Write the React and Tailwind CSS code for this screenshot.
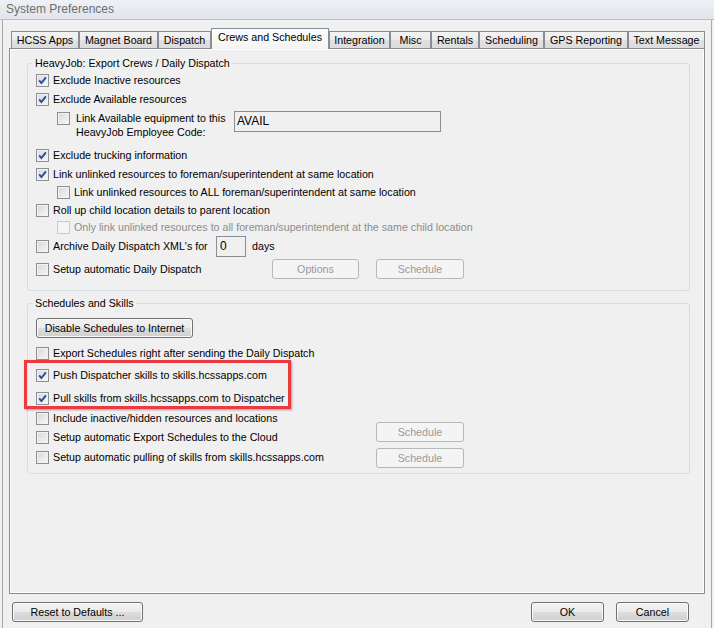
import clsx from "clsx";

const tabs = [
  ["HCSS Apps", "w-[68px]"],
  ["Magnet Board", "w-[79px]"],
  ["Dispatch", "w-[53px]"],
  ["Crews and Schedules", "w-[118px]", true],
  ["Integration", "w-[61px]"],
  ["Misc", "w-[41px]"],
  ["Rentals", "w-[48px]"],
  ["Scheduling", "w-[65px]"],
  ["GPS Reporting", "w-[84px]"],
  ["Text Message", "w-[77px]"],
];

function Check({ checked, disabled, className }) {
  return (
    <span
      className={clsx(
        "flex h-[13px] w-[13px] shrink-0 items-center justify-center border",
        disabled
          ? "border-[#c9cbcc] bg-[#f4f4f4]"
          : "border-[#8e8f8f] bg-[linear-gradient(135deg,#d6d8db,#f7f7f7)] shadow-[inset_0_0_0_1px_#f2f2f2]",
        className
      )}
    >
      {checked && (
        <svg viewBox="0 0 11 11" className="h-[11px] w-[11px]">
          <path d="M2.2 5.4 L4.4 8 L8.9 2.3" fill="none" stroke="#2a4a9e" strokeWidth="1.9" />
        </svg>
      )}
    </span>
  );
}

function Btn({ children, disabled, className }) {
  return (
    <button
      className={clsx(
        "flex h-[20px] shrink-0 items-center justify-center rounded-[3px] border",
        disabled
          ? "border-[#b5b8ba] bg-[#f4f4f4] text-[#9a9a9a]"
          : "border-[#707070] bg-[linear-gradient(#f2f2f2,#ebebeb_50%,#dddddd_50%,#cfcfcf)] text-black shadow-[inset_0_0_0_1px_#fbfbfb]",
        className
      )}
    >
      {children}
    </button>
  );
}

function Row({ checked, disabled, h, indent, children, extra, labelW }) {
  return (
    <div className={clsx("flex items-center", h, indent && "pl-[21px]")}>
      <Check checked={checked} disabled={disabled} />
      <span className={clsx("ml-[4px] shrink-0 whitespace-nowrap", labelW, disabled && "text-[#8d8d8d]")}>
        {children}
      </span>
      {extra}
    </div>
  );
}

function Group({ title, className, children }) {
  return (
    <fieldset className={clsx("w-[663px] rounded-[3px] border border-[#d5dfe5] pl-[8px]", className)}>
      <legend className="-ml-[3px] px-[2px] leading-[14px]">{title}</legend>
      {children}
    </fieldset>
  );
}

export default function App() {
  return (
    <div className="relative h-[628px] w-[714px] overflow-hidden bg-[#f0f0f0] font-['Liberation_Sans',Arial,sans-serif] text-[10.7px] leading-[13px] text-black">
      {/* Title bar */}
      <div className="flex h-[20px] items-center border-b border-[#b9bfc6] bg-[linear-gradient(#eef1f5,#e0e5eb)] pl-[6px] text-[12px] text-[#6e6e6e]">
        System Preferences
      </div>

      <div className="ml-[2px] h-[608px] w-[710px] border-x border-[#a9a9a9] pt-[8px]">
        {/* Tabs */}
        <div className="ml-[8px] flex h-[20px] items-end">
          {tabs.map(([label, w, active]) => (
            <div
              key={label}
              className={clsx(
                "flex items-center justify-center border-x border-t border-[#898c95] whitespace-nowrap",
                w,
                active
                  ? "relative z-10 -mb-px h-[21px] bg-[linear-gradient(#fdfdfd,#f4f4f4)] pb-[3px]"
                  : "h-[17px] bg-[linear-gradient(#f3f3f3,#ececec_50%,#e1e1e1_50%,#dcdcdc)]"
              )}
            >
              {label}
            </div>
          ))}
        </div>

        {/* Tab page */}
        <div className="ml-[6px] h-[546px] w-[696px] border border-[#898c95] pl-[17px] pt-[7px] shadow-[inset_0_0_0_1px_#ffffff]">
          <Group title="HeavyJob: Export Crews / Daily Dispatch" className="pb-[9px] pt-[1px]">
            <Row checked h="h-[19px]">Exclude Inactive resources</Row>
            <Row checked h="h-[19px]">Exclude Available resources</Row>
            <div className="flex h-[37px] items-start pl-[21px] pt-[2px]">
              <Check className="mt-[1px]" />
              <span className="ml-[6px] w-[158px] shrink-0 leading-[14px]">
                Link Available equipment to this
                <br />
                HeavyJob Employee Code:
              </span>
              <div className="flex h-[21px] w-[207px] items-center border border-[#8b8e96] bg-[#f0f0f0] pl-[2px] text-[12px]">
                AVAIL
              </div>
            </div>
            <Row checked h="h-[19px]">Exclude trucking information</Row>
            <Row checked h="h-[18px]">Link unlinked resources to foreman/superintendent at same location</Row>
            <Row indent h="h-[18px]">Link unlinked resources to ALL foreman/superintendent at same location</Row>
            <Row h="h-[18px]">Roll up child location details to parent location</Row>
            <Row indent disabled h="h-[16px]">
              Only link unlinked resources to all foreman/superintendent at the same child location
            </Row>
            <Row
              h="h-[22px]"
              labelW="w-[163px]"
              extra={
                <>
                  <div className="flex h-[21px] w-[30px] items-center border border-[#8b8e96] pl-[3px] text-[12px]">0</div>
                  <span className="ml-[6px]">days</span>
                </>
              }
            >
              Archive Daily Dispatch XML's for
            </Row>
            <Row
              h="h-[24px]"
              labelW="w-[219px]"
              extra={
                <>
                  <Btn disabled className="w-[87px]">Options</Btn>
                  <Btn disabled className="ml-[17px] w-[88px]">Schedule</Btn>
                </>
              }
            >
              Setup automatic Daily Dispatch
            </Row>
          </Group>

          <Group title="Schedules and Skills" className="mt-[5px] pb-[6px] pt-[8px]">
            <Btn className="w-[157px]">Disable Schedules to Internet</Btn>
            <div className="mt-[5px]">
              <Row h="h-[20px]">Export Schedules right after sending the Daily Dispatch</Row>
              <Row checked h="h-[24px]">Push Dispatcher skills to skills.hcssapps.com</Row>
              <Row checked h="h-[22px]">Pull skills from skills.hcssapps.com to Dispatcher</Row>
              <Row h="h-[18px]">Include inactive/hidden resources and locations</Row>
              <Row
                h="h-[20px]"
                labelW="w-[323px]"
                extra={<Btn disabled className="mb-[10px] w-[88px]">Schedule</Btn>}
              >
                Setup automatic Export Schedules to the Cloud
              </Row>
              <Row
                h="h-[20px]"
                labelW="w-[323px]"
                extra={<Btn disabled className="mt-[2px] w-[88px]">Schedule</Btn>}
              >
                Setup automatic pulling of skills from skills.hcssapps.com
              </Row>
            </div>
          </Group>
        </div>

        {/* Dialog buttons */}
        <div className="mt-[8px] flex items-center pl-[9px] pr-[22px]">
          <Btn className="w-[131px]">Reset to Defaults ...</Btn>
          <Btn className="ml-auto w-[73px]">OK</Btn>
          <Btn className="ml-[12px] w-[73px]">Cancel</Btn>
        </div>
      </div>

      {/* Annotation highlight */}
      <div className="pointer-events-none absolute left-[24px] top-[360px] h-[49px] w-[267px] border-[3px] border-[#ec3a40] shadow-[1px_1px_2px_rgba(0,0,0,0.35)]" />
    </div>
  );
}
